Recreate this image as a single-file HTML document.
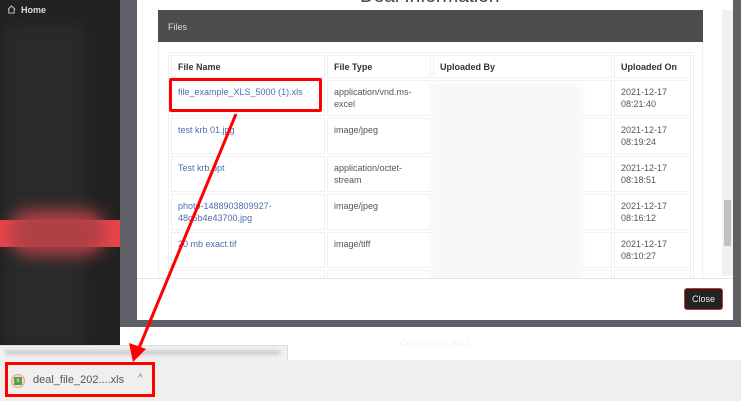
<!DOCTYPE html>
<html><head><meta charset="utf-8"><style>
*{margin:0;padding:0;box-sizing:border-box}
body{width:741px;height:401px;overflow:hidden;position:relative;background:#fff;font-family:"Liberation Sans",sans-serif}
.abs{position:absolute}
td,th{font-size:9px;border:1px solid #eef0f4}
tr.r{height:32px;vertical-align:top}
tr.r td{padding:5px 6px;line-height:12px}
td.l{color:#4a6fb0}
</style></head><body>
<div class="abs" style="left:0;top:0;width:741px;height:327px;background:#5f6167"></div>
<div class="abs" style="left:0;top:0;width:120px;height:345px;background:#222"></div>
<div class="abs" style="left:5px;top:25px;width:80px;height:320px;background:#2a2a2a;filter:blur(6px)"></div>
<div class="abs" style="left:0;top:220px;width:120px;height:27px;background:#e8444a"></div>
<div class="abs" style="left:10px;top:210px;width:95px;height:45px;background:#b04045;filter:blur(8px);border-radius:20px"></div>
<div class="abs" style="left:7px;top:5px;color:#ddd;font-size:9px;font-weight:bold">
<svg width="9" height="9" viewBox="0 0 10 10" style="vertical-align:-1px"><path d="M1 5L5 1L9 5M2 4V9H8V4" fill="none" stroke="#ccc" stroke-width="1"/></svg>&nbsp; Home</div>
<div class="abs" style="left:137px;top:-10px;width:596px;height:330px;background:#fff"></div>
<div class="abs" style="left:360px;top:-14px;font-size:19px;color:#444">Deal Information</div>
<div class="abs" style="left:158px;top:10px;width:545px;height:32px;background:#4d4d4d;color:#ddd;font-size:9px;padding:12px 0 0 10px">Files</div>
<div class="abs" style="left:158px;top:42px;width:545px;height:236px;border-left:1px solid #eee;border-right:1px solid #eee;overflow:hidden">
<table style="position:absolute;left:9px;top:10px;border-collapse:separate;border-spacing:2px;border:1px solid #eef0f4;color:#555">
<tr style="height:23px;font-weight:bold;color:#333"><td style="width:154px;padding-left:6px">File Name</td><td style="width:104px;padding-left:6px">File Type</td><td style="width:179px;padding-left:6px">Uploaded By</td><td style="width:77px;padding-left:6px">Uploaded On</td></tr>
<tr class="r"><td class="l">file_example_XLS_5000 (1).xls</td><td>application/vnd.ms-<br>excel</td><td></td><td>2021-12-17<br>08:21:40</td></tr>
<tr class="r"><td class="l">test krb 01.jpg</td><td>image/jpeg</td><td></td><td>2021-12-17<br>08:19:24</td></tr>
<tr class="r"><td class="l">Test krb.ppt</td><td>application/octet-<br>stream</td><td></td><td>2021-12-17<br>08:18:51</td></tr>
<tr class="r"><td class="l">photo-1488903809927-<br>48c5b4e43700.jpg</td><td>image/jpeg</td><td></td><td>2021-12-17<br>08:16:12</td></tr>
<tr class="r"><td class="l">20 mb exact.tif</td><td>image/tiff</td><td></td><td>2021-12-17<br>08:10:27</td></tr>
<tr class="r"><td class="l">policy 1.csv</td><td>text/csv</td><td>vasua i popez</td><td>2021-12-17</td></tr>
</table>
<div class="abs" style="left:275px;top:42px;width:148px;height:195px;background:#f7f7f7;filter:blur(4px)"></div>
</div>
<div class="abs" style="left:722px;top:10px;width:11px;height:266px;background:#f1f1f1"></div>
<div class="abs" style="left:724px;top:200px;width:7px;height:46px;background:#c1c1c1"></div>
<div class="abs" style="left:137px;top:278px;width:596px;height:1px;background:#e5e5e5"></div>
<div class="abs" style="left:684px;top:288px;width:39px;height:22px;background:#222;border:1px solid #c33;border-radius:3px;color:#eee;font-size:9px;text-align:center;line-height:20px">Close</div>
<div class="abs" style="left:120px;top:327px;width:621px;height:33px;background:#fff;color:#f2f2f2;font-size:9px;padding:11px 0 0 280px">Copyright © 2021</div>
<div class="abs" style="left:120px;top:360px;width:621px;height:1px;background:#e8e8e8"></div>
<div class="abs" style="left:0;top:360px;width:741px;height:41px;background:#f0efee"></div>
<div class="abs" style="left:0;top:345px;width:288px;height:15px;background:#f1f1f1;border-top:1px solid #ddd;border-right:1px solid #ddd"></div>
<div class="abs" style="left:5px;top:350px;width:275px;height:5px;background:#cfcfcf;filter:blur(1.5px)"></div>
<div class="abs" style="left:5px;top:362px;width:150px;height:35px;border:3px solid #f00"></div>
<div class="abs" style="left:11px;top:374px;width:14px;height:14px;border-radius:50%;background:#f6d9c6;border:1px solid #e9a07a"></div>
<div class="abs" style="left:14px;top:377px;width:8px;height:8px;background:#5a9e4a;color:#fff;font-size:6px;text-align:center;line-height:8px">x</div>
<div class="abs" style="left:33px;top:374px;color:#555;font-size:11px">deal_file_202....xls</div>
<div class="abs" style="left:138px;top:373px;color:#777;font-size:10px">^</div>
<div class="abs" style="left:169px;top:78px;width:153px;height:34px;border:3px solid #f00;border-radius:2px"></div>
<svg class="abs" style="left:0;top:0" width="741" height="401"><line x1="236" y1="114" x2="139" y2="348" stroke="#f00" stroke-width="3"/><path d="M133 362L129 343L146 349Z" fill="#f00"/></svg>
</body></html>
